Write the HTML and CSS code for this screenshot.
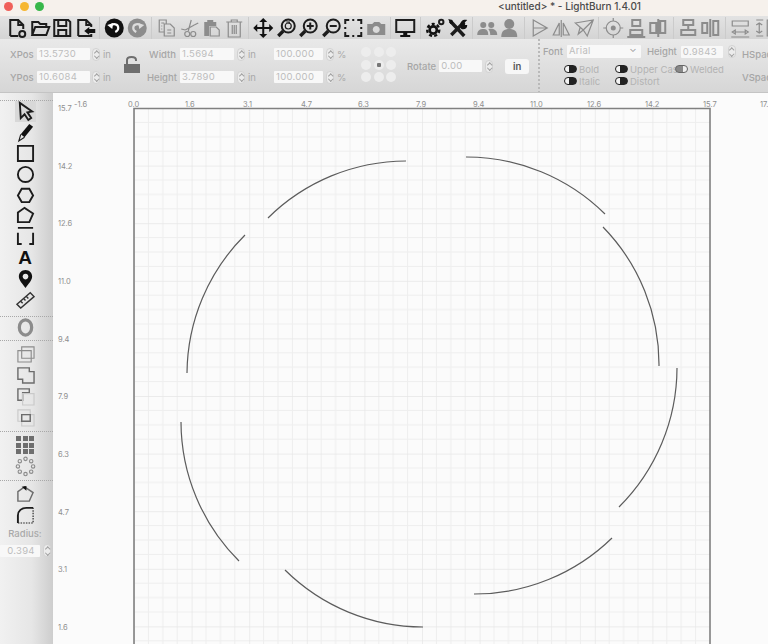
FILE: index.html
```html
<!DOCTYPE html>
<html lang="en">

<head>
    <meta charset="UTF-8">
    <title>LightBurn 1.4.01</title>
    <link rel="stylesheet" href="styles.css">
</head>

<body>
    <div class="titlebar">
        <span class="light red"></span>
        <span class="light yellow"></span>
        <span class="light green"></span>
        <span class="title">&lt;untitled&gt; * - LightBurn 1.4.01</span>
    </div>

    <div class="toolbar">
        <div class="tool-group">
            <svg class="ico" viewBox="0 0 22 22"><path class="ln" d="M4 19V3h8l5 5v4M4 19h8M12 3v5h5"/><circle class="ln" cx="16" cy="17" r="3"/></svg>
            <svg class="ico" viewBox="0 0 22 22"><path class="ln" d="M3 18V5h6l2 2h6v3M3 18l3-8h14l-3 8z"/></svg>
            <svg class="ico" viewBox="0 0 22 22"><path class="ln" d="M3 3h14l2 2v14H3zM7 3v6h8V3M7 19v-6h8v6"/></svg>
            <svg class="ico" viewBox="0 0 22 22"><path class="ln" d="M4 19V3h8l5 5v2M4 19h13v-2M12 3v5h5"/><path class="fill" d="M21 12h-6v-2l-5 4 5 4v-2h6z"/></svg>
        </div>
        <div class="tool-group">
            <svg class="ico" viewBox="0 0 22 22"><circle class="fill" cx="11" cy="11" r="9.5"/><path class="curl" d="M7 9c3-3 8-2 8 2 0 2-1 3-3 4"/><path class="white" d="M4 8l6-2-1 6z"/></svg>
            <svg class="ico off" viewBox="0 0 22 22"><circle class="fill" cx="11" cy="11" r="9.5"/><path class="curl" d="M15 9c-3-3-8-2-8 2 0 2 1 3 3 4"/><path class="white" d="M18 8l-6-2 1 6z"/></svg>
        </div>
        <div class="tool-group">
            <svg class="ico off" viewBox="0 0 22 22"><path class="thin" d="M9 15H4V3h7v4M9 7h6l4 4v8H9zM6 6h3M6 9h1M6 12h1M12 13h4M12 16h4"/></svg>
            <svg class="ico off" viewBox="0 0 22 22"><path class="thin" d="M13 3l-3 11M16 8L7 13"/><circle class="thin" cx="9" cy="17" r="2.5"/><path class="thin" d="M3 12l4 1M16 8l4-2"/><circle class="thin" cx="15" cy="17" r="2.5"/></svg>
            <svg class="ico off" viewBox="0 0 22 22"><path class="fill" d="M4 5h3V3h6v2h3v4H9v10H4z"/><path class="thin" d="M10 10h6l3 3v6h-9z"/></svg>
            <svg class="ico off" viewBox="0 0 22 22"><path class="thin" d="M3 5h16M8 5V3h6v2M5 5v15h12V5M9 8v9M11 8v9M13 8v9"/></svg>
        </div>
        <div class="tool-group">
            <svg class="ico" viewBox="0 0 22 22"><path class="fill" d="M11 1l4 4h-3v5h5V7l4 4-4 4v-3h-5v5h3l-4 4-4-4h3v-5H5v3l-4-4 4-4v3h5V5H7z"/></svg>
            <svg class="ico" viewBox="0 0 22 22"><circle class="ln" cx="13" cy="9" r="6.5"/><path class="heavy" d="M8 14l-5 5"/><circle class="thin" cx="13" cy="9" r="3"/><path class="thin" d="M11 5h3v2"/></svg>
            <svg class="ico" viewBox="0 0 22 22"><circle class="ln" cx="13" cy="9" r="6.5"/><path class="heavy" d="M8 14l-5 5"/><path class="ln" d="M13 5.5v7M9.5 9h7"/></svg>
            <svg class="ico" viewBox="0 0 22 22"><circle class="ln" cx="13" cy="9" r="6.5"/><path class="heavy" d="M8 14l-5 5"/><path class="ln" d="M9.5 9h7"/></svg>
            <svg class="ico" viewBox="0 0 22 22"><path class="ln" d="M3 7V3h4M15 3h4v4M19 15v4h-4M7 19H3v-4M10 3h2M10 19h2M3 10v2M19 10v2"/></svg>
            <svg class="ico off" viewBox="0 0 22 22"><path class="fill" fill-rule="evenodd" d="M2 7h5l2-2h5l2 2h4v11H2zM11 9a3.5 3.5 0 1 0 .01 0z"/></svg>
        </div>
        <div class="tool-group">
            <svg class="ico" viewBox="0 0 22 22"><path class="ln" d="M2 3h18v12H2z"/><path class="fill" d="M9 15h4v3h3v2H6v-2h3z"/></svg>
        </div>
        <div class="tool-group">
            <svg class="ico" viewBox="0 0 22 22"><circle class="gear-ring" cx="9" cy="13" r="3.6"/><circle class="gear" cx="9" cy="13" r="6"/><circle class="ln" cx="17" cy="5" r="2.2"/></svg>
            <svg class="ico" viewBox="0 0 22 22"><path class="heavy" d="M4 4l14 15M18 5L5 18"/><path class="fill" d="M14 8c0-4 3-6 7-5l-3 3 1 2 2 0c0 4-3 5-6 4zM2 2l4 1 1 3-3 1z"/></svg>
        </div>
        <div class="tool-group">
            <svg class="ico off" viewBox="0 0 22 22"><circle class="fill" cx="7" cy="8" r="3"/><circle class="fill" cx="15" cy="8" r="3"/><path class="fill" d="M1 18c0-5 3-6 6-6s5 1 5 6zM12 12c4-1 9 0 9 6h-7c0-3-1-5-2-6z"/></svg>
            <svg class="ico off" viewBox="0 0 22 22"><circle class="fill" cx="11" cy="7" r="5"/><path class="fill" d="M3 20c0-6 3-8 8-8s8 2 8 8z"/></svg>
        </div>
        <div class="tool-group">
            <svg class="ico off" viewBox="0 0 22 22"><path class="thin" d="M5 3l14 8-14 8zM5 11h14"/></svg>
            <svg class="ico off" viewBox="0 0 22 22"><path class="thin" d="M9 6L3 18h6zM13 6l6 12h-6zM11 3v17"/></svg>
            <svg class="ico off" viewBox="0 0 22 22"><path class="thin" d="M2 6l18-3-6 16-4-6zM20 3L10 13M7 10l-2 7 5-4"/></svg>
        </div>
        <div class="tool-group">
            <svg class="ico off" viewBox="0 0 22 22"><circle class="thin" cx="11" cy="11" r="7"/><circle class="fill" cx="11" cy="11" r="2.5"/><path class="thin" d="M11 1v3M11 18v3M1 11h3M18 11h3"/></svg>
            <svg class="ico off" viewBox="0 0 22 22"><path class="ln" d="M7 3h8v6H7zM5 13h12v5H5zM2 20h18"/></svg>
            <svg class="ico off" viewBox="0 0 22 22"><path class="ln" d="M3 6h6v10H3zM13 4h5v12h-5zM11 2v18"/></svg>
        </div>
        <div class="tool-group">
            <svg class="ico off" viewBox="0 0 22 22"><path class="ln" d="M6 3h10v5H6zM4 13h14v5H4zM11 8v5"/></svg>
            <svg class="ico off" viewBox="0 0 22 22"><path class="ln" d="M3 6h5v10H3zM14 4h5v14h-5zM11 2v18"/></svg>
        </div>
        <div class="tool-group">
            <svg class="ico off" viewBox="0 0 22 22"><path class="thin" d="M3 4h16v5H3zM2 20h18"/><path class="thin" d="M6 15h10M3 15l3-2v4zM19 15l-3-2v4z"/></svg>
            <svg class="ico off" viewBox="0 0 22 22"><path class="thin" d="M5 3h7M5 19h7M8 6v10M5 8l3-2 3 2M5 14l3 2 3-2M16 3h6v16h-6z"/></svg>
        </div>
    </div>

    <div class="props">
        <div class="prop-col pos-col">
            <div class="field"><span class="lbl pos-lbl">XPos</span><div class="num pos-num">13.5730</div><span class="spin"></span><span class="unit">in</span></div>
            <div class="field"><span class="lbl pos-lbl">YPos</span><div class="num pos-num">10.6084</div><span class="spin"></span><span class="unit">in</span></div>
        </div>
        <svg class="lock" viewBox="0 0 16 20"><path class="lock-arc" d="M3 9V5c0-4 9-4 9 0v1"/><path class="lock-body" d="M0 9h16v9H0z"/></svg>
        <div class="prop-col size-col">
            <div class="field"><span class="lbl size-lbl">Width</span><div class="num size-num">1.5694</div><span class="spin"></span><span class="unit">in</span></div>
            <div class="field"><span class="lbl size-lbl">Height</span><div class="num size-num">3.7890</div><span class="spin"></span><span class="unit">in</span></div>
        </div>
        <div class="prop-col pct-col">
            <div class="field"><div class="num pct-num">100.000</div><span class="spin"></span><span class="unit">%</span></div>
            <div class="field"><div class="num pct-num">100.000</div><span class="spin"></span><span class="unit">%</span></div>
        </div>
        <div class="anchors">
            <span class="anchor"></span><span class="anchor"></span><span class="anchor"></span>
            <span class="anchor"></span><span class="anchor picked"></span><span class="anchor"></span>
            <span class="anchor"></span><span class="anchor"></span><span class="anchor"></span>
        </div>
        <div class="rotate">
            <span class="lbl">Rotate</span><div class="num rot-num">0.00</div><span class="spin"></span>
            <button class="unit-btn">in</button>
        </div>
        <div class="font-col">
            <div class="font-row">
                <span class="lbl">Font</span>
                <div class="num font-select">Arial<span class="chevron">&#8964;</span></div>
                <span class="lbl font-height">Height</span>
                <div class="num height-num">0.9843</div><span class="spin"></span>
            </div>
            <div class="toggles">
                <div class="toggle-col">
                    <div class="toggle"><span class="switch"></span>Bold</div>
                    <div class="toggle"><span class="switch"></span>Italic</div>
                </div>
                <div class="toggle-col case-col">
                    <div class="toggle"><span class="switch"></span>Upper Case</div>
                    <div class="toggle"><span class="switch"></span>Distort</div>
                </div>
                <div class="toggle-col welded-col">
                    <div class="toggle"><span class="switch open"></span>Welded</div>
                </div>
            </div>
        </div>
        <div class="prop-col space-col">
            <div class="field"><span class="lbl">HSpace</span></div>
            <div class="field"><span class="lbl">VSpace</span></div>
        </div>
    </div>

    <div class="main">
        <div class="tools">
            <div class="dots first"></div>
            <svg class="tool picked-tool" viewBox="0 0 22 22"><path class="ln" d="M5 2l13 9-5 1 4 6-3 2-4-6-4 4z"/></svg>
            <svg class="tool" viewBox="0 0 22 22"><path class="fill" d="M15 2l4 3-9 11-4-3z"/><path class="thin" d="M6 13l-2 7 6-4"/></svg>
            <svg class="tool" viewBox="0 0 22 22"><path class="ln" d="M3 3h16v16H3z"/></svg>
            <svg class="tool" viewBox="0 0 22 22"><circle class="ln" cx="11" cy="11" r="8"/></svg>
            <svg class="tool" viewBox="0 0 22 22"><path class="ln" d="M7 4h8l4 7-4 7H7l-4-7z"/></svg>
            <svg class="tool" viewBox="0 0 22 22"><path class="ln" d="M3 8l7-5 9 6-4 9H3z"/></svg>
            <svg class="tool" viewBox="0 0 22 22"><path class="ln" d="M3 2h16M3 7v12h4M19 7v12h-4"/></svg>
            <div class="tool tool-letter">A</div>
            <svg class="tool" viewBox="0 0 22 22"><path class="fill" fill-rule="evenodd" d="M11 2c4 0 7 3 7 7 0 4-4 8-7 12-3-4-7-8-7-12 0-4 3-7 7-7zM11 6a3 3 0 1 0 .01 0z"/></svg>
            <svg class="tool" viewBox="0 0 22 22"><path class="thin-dark" d="M2 16L16 4l4 4L6 20zM6 13l2 2M9 10l2 2M12 8l2 2"/></svg>
            <div class="dots gap-top"></div>
            <svg class="tool off" viewBox="0 0 22 22"><ellipse class="heavy" cx="11" cy="11" rx="6.5" ry="8"/></svg>
            <div class="dots small-gap"></div>
            <svg class="tool off" viewBox="0 0 22 22"><path class="thin" d="M3 7h14v12H3z"/><path class="thin" d="M7 3h13v12H7z"/></svg>
            <svg class="tool off" viewBox="0 0 22 22"><path class="thin-dark" d="M3 3h12v4h5v12H8v-4H3z"/></svg>
            <svg class="tool off" viewBox="0 0 22 22"><path class="thin-dark" d="M3 3h12v4H8v8H3z"/><path class="faint" d="M8 8h12v12H8z"/></svg>
            <svg class="tool off" viewBox="0 0 22 22"><path class="faint" d="M3 3h13v12H3zM7 8h13v12H7z"/><path class="thin-dark" d="M7 8h9v7H7z"/></svg>
            <div class="dots mid-gap"></div>
            <div class="tool array-grid">
                <span></span><span></span><span></span><span></span><span></span><span></span><span></span><span></span><span></span>
            </div>
            <svg class="tool off" viewBox="0 0 22 22"><circle class="thin" cx="11" cy="3" r="1.8"/><circle class="thin" cx="17" cy="5.5" r="1.8"/><circle class="thin" cx="19" cy="11" r="1.8"/><circle class="thin" cx="17" cy="16.5" r="1.8"/><circle class="thin" cx="11" cy="19" r="1.8"/><circle class="thin" cx="5" cy="16.5" r="1.8"/><circle class="thin" cx="3" cy="11" r="1.8"/><circle class="thin" cx="5" cy="5.5" r="1.8"/></svg>
            <div class="dots mid-gap"></div>
            <svg class="tool off" viewBox="0 0 22 22"><path class="thin-dark" d="M3 8l7-5 9 6-4 9H3z"/><path class="fill-dark" d="M7 3l5-1v5z"/></svg>
            <svg class="tool" viewBox="0 0 22 22"><path class="ln" d="M3 19v-8c0-5 4-8 9-8h7"/><path class="dash" d="M3 19h16V3"/></svg>
            <div class="radius-lbl">Radius:</div>
            <div class="radius-field"><div class="num radius-num">0.394</div><span class="spin"></span></div>
        </div>

        <div class="stage">
            <svg class="canvas" viewBox="53 92 715 552">
                <defs>
                    <pattern id="grid" x="134" y="107" width="57.6" height="57.6" patternUnits="userSpaceOnUse">
                        <path class="minor" d="M14.4 0v57.6M28.8 0v57.6M43.2 0v57.6M0 14.4h57.6M0 28.8h57.6M0 43.2h57.6"/>
                        <path class="major" d="M0 0v57.6M0 0h57.6"/>
                    </pattern>
                </defs>
                <rect x="134" y="107" width="576" height="560" fill="url(#grid)"/>
                <path class="bed" d="M134 660V107.5H710V660"/>

                <g class="ruler">
                    <text x="74" y="106">-1.6</text>
                    <text x="128" y="106">0.0</text>
                    <text x="185" y="106">1.6</text>
                    <text x="243" y="106">3.1</text>
                    <text x="301" y="106">4.7</text>
                    <text x="358" y="106">6.3</text>
                    <text x="416" y="106">7.9</text>
                    <text x="473" y="106">9.4</text>
                    <text x="530" y="106">11.0</text>
                    <text x="587" y="106">12.6</text>
                    <text x="645" y="106">14.2</text>
                    <text x="703" y="106">15.7</text>
                    <text x="760" y="106">17.3</text>
                    <text x="58" y="110">15.7</text>
                    <text x="58" y="168">14.2</text>
                    <text x="58" y="225">12.6</text>
                    <text x="58" y="283">11.0</text>
                    <text x="58" y="341">9.4</text>
                    <text x="58" y="398">7.9</text>
                    <text x="58" y="456">6.3</text>
                    <text x="58" y="514">4.7</text>
                    <text x="58" y="571">3.1</text>
                    <text x="58" y="629">1.6</text>
                </g>

                <g class="arcs">
                    <path d="M268 217A197 197 0 0 1 406 160"/>
                    <path d="M466 156A197 197 0 0 1 605 213"/>
                    <path d="M603 226A197 197 0 0 1 659 365"/>
                    <path d="M677 367A197 197 0 0 1 619 506"/>
                    <path d="M612 537A197 197 0 0 1 474 593"/>
                    <path d="M423 626A197 197 0 0 1 285 569"/>
                    <path d="M239 560A197 197 0 0 1 181 421"/>
                    <path d="M187 372A197 197 0 0 1 245 234"/>
                </g>
            </svg>
        </div>
    </div>
</body>

</html>
```

FILE: styles.css
```css
html, body {
    height: 100%;
}

body {
    margin: 0;
    display: flex;
    flex-direction: column;
    overflow: hidden;
    font-family: 'Inter', 'Liberation Sans', sans-serif;
    background: #fbfbfb;
}

/* title bar */
.titlebar {
    display: flex;
    align-items: center;
    flex: 0 0 auto;
    box-sizing: border-box;
    height: 16px;
    padding: 0 127px 4px 4px;
    background: #f6f1ec;
}

.light {
    width: 9px;
    height: 9px;
    margin-right: 6.5px;
    border-radius: 50%;
}

.red { background: #f0605a; }
.yellow { background: #f6b731; }
.green { background: #37b74a; }

.title {
    margin-left: auto;
    font-size: 10px;
    font-weight: 500;
    color: #4a4a4a;
    white-space: nowrap;
}

/* icon toolbar */
.toolbar {
    display: flex;
    align-items: center;
    flex: 0 0 auto;
    height: 23px;
    padding-left: 6px;
    overflow: hidden;
    background: linear-gradient(#e3e3e3, #d4d4d4);
}

.tool-group {
    display: flex;
    flex: 0 0 auto;
}

.tool-group + .tool-group {
    margin-left: 3px;
    padding-left: 3px;
    border-left: 1px solid #cbcbcb;
}

.ico {
    flex: 0 0 auto;
    width: 22.5px;
    height: 22px;
}

/* shared icon strokes */
svg .ln { fill: none; stroke: #1c1c1c; stroke-width: 2; }
svg .heavy { fill: none; stroke: #1c1c1c; stroke-width: 3.4; }
svg .thin { fill: none; stroke: #1c1c1c; stroke-width: 1.2; }
svg .thin-dark { fill: none; stroke: #333; stroke-width: 1.5; }
svg .faint { fill: none; stroke: #c9c9c9; stroke-width: 1.2; }
svg .fill { fill: #111; }
svg .fill-dark { fill: #111; }
svg .white { fill: #fff; }
svg .curl { fill: none; stroke: #fff; stroke-width: 2.2; }
svg .gear { fill: none; stroke: #111; stroke-width: 2.4; stroke-dasharray: 3 2.2; }
svg .gear-ring { fill: none; stroke: #111; stroke-width: 2.6; }
svg .dash { fill: none; stroke: #222; stroke-width: 1.2; stroke-dasharray: 1.6 1.2; }

.off .ln, .off .heavy, .off .thin { stroke: #8c8c8c; }
.off .thin-dark { stroke: #6c6c6c; }
.off .fill { fill: #8c8c8c; }
.off .white { fill: #dcdcdc; }
.off .curl { stroke: #dcdcdc; }

/* properties bar */
.props {
    display: flex;
    flex: 0 0 auto;
    height: 53px;
    overflow: hidden;
    font-size: 9.5px;
    color: #a9a9a9;
    background: linear-gradient(#e9e9e9, #d6d6d6);
    border-bottom: 1px solid #c4c4c4;
}

.prop-col {
    display: flex;
    flex: 0 0 auto;
    flex-direction: column;
    gap: 1px;
    padding-top: 4px;
}

.field {
    display: flex;
    align-items: center;
    height: 22px;
}

.lbl {
    flex: 0 0 auto;
    font-weight: 500;
    color: #a6a6a6;
}

.num {
    flex: 0 0 auto;
    box-sizing: border-box;
    height: 12px;
    padding-left: 2px;
    line-height: 12px;
    font-size: 9.5px;
    letter-spacing: 0.3px;
    color: #bdbdbd;
    background: #f8f8f8;
    border-radius: 1px;
}

.spin {
    position: relative;
    flex: 0 0 auto;
    box-sizing: border-box;
    width: 8px;
    height: 13px;
    margin-left: 2px;
    background: #ececec;
    border: 1px solid #d2d2d2;
    border-radius: 4px;
}

.spin::before,
.spin::after {
    content: '';
    position: absolute;
    left: 1.5px;
    width: 2.5px;
    height: 2.5px;
    border-left: 1px solid #a0a0a0;
    transform: rotate(45deg);
}

.spin::before {
    top: 2px;
    border-top: 1px solid #a0a0a0;
}

.spin::after {
    bottom: 2px;
    border-left: none;
    border-right: 1px solid #a0a0a0;
    border-bottom: 1px solid #a0a0a0;
}

.unit {
    margin-left: 3px;
}

.pos-col {
    width: 114px;
    margin-left: 10px;
}

.pos-lbl {
    width: 24px;
    margin-right: 3px;
}

.pos-num { width: 53px; }

.lock {
    flex: 0 0 auto;
    width: 16px;
    height: 20px;
    margin-top: 16px;
}

.lock-arc { fill: none; stroke: #6e6e6e; stroke-width: 2; }
.lock-body { fill: #6e6e6e; }

.size-col {
    width: 127px;
    margin-left: 7px;
}

.size-lbl {
    width: 29px;
    margin-right: 4px;
    text-align: right;
}

.size-num { width: 54px; }

.size-col .spin {
    margin-left: 3px;
}

.pct-col {
    width: 87px;
}

.pct-num { width: 49px; }

.pct-col .spin {
    margin-left: 3px;
}

.anchors {
    display: grid;
    flex: 0 0 auto;
    grid-template-columns: repeat(3, 10px);
    grid-auto-rows: 10px;
    gap: 2.5px;
    height: 35px;
    margin: 8px 0 0 0;
}

.anchor {
    background: #ededed;
    border-radius: 50%;
}

.anchor.picked {
    background: radial-gradient(circle, #777 0 2px, #ededed 2.5px);
}

.rotate {
    display: flex;
    flex: 0 0 auto;
    align-items: center;
    box-sizing: border-box;
    width: 133px;
    height: 54px;
    margin-left: 11px;
    border-right: 2px dotted #b9b9b9;
}

.rot-num {
    width: 43px;
    margin-left: 3px;
}

.rotate .spin {
    margin-left: 3px;
}

.unit-btn {
    width: 24px;
    height: 15px;
    margin-left: 12px;
    padding: 0;
    border: none;
    border-radius: 3px;
    font-family: inherit;
    font-size: 9.5px;
    font-weight: 600;
    color: #555;
    background: #f7f7f7;
}

.font-col {
    flex: 0 0 auto;
    width: 198px;
    margin-left: 3px;
}

.font-row {
    display: flex;
    align-items: center;
    height: 13px;
    margin-top: 6px;
}

.font-select {
    position: relative;
    width: 74px;
    height: 13px;
    margin-left: 4px;
}

.chevron {
    position: absolute;
    top: -2px;
    right: 4px;
    color: #999;
}

.font-height {
    margin-left: 6px;
}

.height-num {
    width: 42px;
    margin-left: 4px;
}

.font-row .spin {
    margin-left: 5px;
}

.toggles {
    display: flex;
    margin-top: 6px;
    margin-left: 21px;
}

.toggle-col {
    display: flex;
    flex: 0 0 auto;
    flex-direction: column;
    gap: 2px;
    width: 51px;
}

.case-col {
    width: 60px;
}

.welded-col {
    width: 60px;
}

.toggle {
    display: flex;
    align-items: center;
    height: 10px;
    color: #b3b3b3;
    white-space: nowrap;
}

.switch {
    flex: 0 0 auto;
    box-sizing: border-box;
    width: 13px;
    height: 8px;
    margin-right: 2px;
    background: linear-gradient(90deg, #f4f4f4 0 4px, #222 4px);
    border: 1.5px solid #222;
    border-radius: 4px;
}

.switch.open {
    background: linear-gradient(90deg, #888 0 7px, #eee 7px);
    border-color: #666;
}

.space-col {
    margin-left: 1px;
}

/* left tools and canvas */
.main {
    display: flex;
    flex: 1 1 auto;
    min-height: 0;
}

.tools {
    display: flex;
    flex: 0 0 auto;
    flex-direction: column;
    align-items: center;
    width: 53px;
    background: linear-gradient(90deg, #f1f1f1 0, #e6e6e6 60%, #cdcdcd 100%);
}

.dots {
    flex: 0 0 auto;
    width: 100%;
    border-top: 1px dotted #a8a8a8;
}

.first { margin: 7px 0 0; }
.gap-top { margin-top: 6px; }
.small-gap { margin: 2.5px 0 3px; }
.mid-gap { margin: 3px 0; }

.tool {
    flex: 0 0 auto;
    width: 21px;
    height: 20.9px;
    margin-right: 3px;
}

.picked-tool {
    background: #d8d8d8;
}

.tool-letter {
    font-family: 'Liberation Sans', sans-serif;
    font-size: 19px;
    font-weight: 700;
    line-height: 21px;
    text-align: center;
    color: #111;
}

.array-grid {
    display: grid;
    grid-template-columns: repeat(3, 5px);
    grid-auto-rows: 5px;
    gap: 1.5px;
    justify-content: center;
    align-content: center;
}

.array-grid span {
    background: #6e6e6e;
}

.radius-lbl {
    margin-top: 3px;
    margin-right: 3px;
    font-size: 9.5px;
    font-weight: 500;
    color: #a9a9a9;
}

.radius-field {
    display: flex;
    align-items: center;
    align-self: flex-start;
    margin-top: 5px;
}

.radius-num {
    width: 40px;
    text-align: center;
}

.radius-field .spin {
    margin-left: 3px;
}

.stage {
    flex: 1 1 auto;
    min-width: 0;
}

.canvas {
    display: block;
    width: 715px;
    height: 552px;
}

.minor { fill: none; stroke: #eeeeee; stroke-width: 1; }
.major { fill: none; stroke: #e6e6e6; stroke-width: 1.4; }
.bed { fill: none; stroke: #808080; stroke-width: 1.6; }

.ruler {
    font-family: 'Inter', 'Liberation Sans', sans-serif;
    font-size: 7.5px;
    fill: #8e8e8e;
}

.arcs path {
    fill: none;
    stroke: #5c5c5c;
    stroke-width: 1.2;
}
```
